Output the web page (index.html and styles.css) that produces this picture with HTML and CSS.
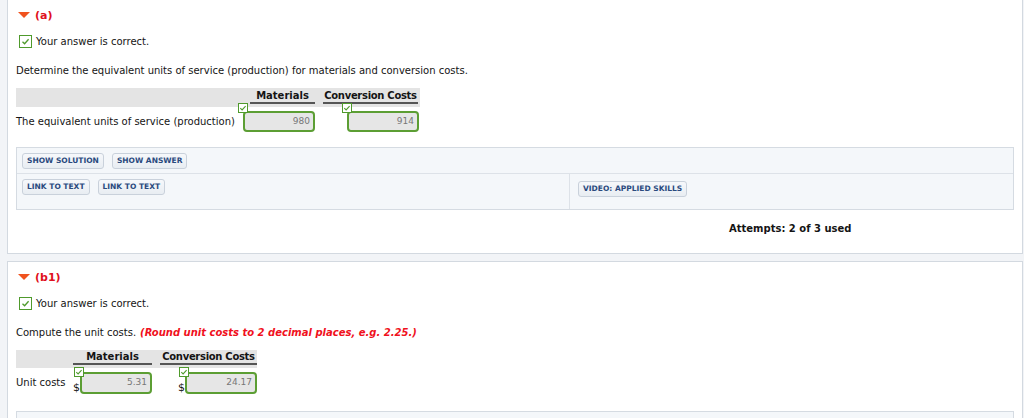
FILE: index.html
```html
<!DOCTYPE html>
<html>
<head>
<meta charset="utf-8">
<link rel="stylesheet" href="styles.css">
</head>
<body>
<div class="panel first">
  <div class="part-head"><span class="tri"></span><span class="part-label">(a)</span></div>
  <div class="correct"><span class="chk"><svg viewBox="0 0 13 13" width="13" height="13"><path d="M3.5 6.8 L5.6 8.8 L9.6 4.2" fill="none" stroke="#4f9a2c" stroke-width="1.3"/></svg></span>Your answer is correct.</div>
  <p class="q">Determine the equivalent units of service (production) for materials and conversion costs.</p>
  <div class="hdr hdr-a">
    <span class="th th-a1">Materials</span>
    <span class="th th-a2">Conversion Costs</span>
  </div>
  <div class="row row-a">
    <span class="lbl">The equivalent units of service (production)</span>
    <span class="cell cell-a1"><span class="mini"><svg viewBox="0 0 10 10" width="10" height="10"><path d="M2.3 5.2 L4.1 6.9 L7.6 3.2" fill="none" stroke="#4f9a2c" stroke-width="1.1"/></svg></span><span class="inp">980</span></span>
    <span class="cell cell-a2"><span class="mini"><svg viewBox="0 0 10 10" width="10" height="10"><path d="M2.3 5.2 L4.1 6.9 L7.6 3.2" fill="none" stroke="#4f9a2c" stroke-width="1.1"/></svg></span><span class="inp">914</span></span>
  </div>
  <div class="btnbox">
    <div class="brow brow1">
      <span class="btn">SHOW SOLUTION</span>
      <span class="btn">SHOW ANSWER</span>
    </div>
    <div class="brow brow2">
      <div class="bcell bleft">
        <span class="btn">LINK TO TEXT</span>
        <span class="btn">LINK TO TEXT</span>
      </div>
      <div class="bcell bright">
        <span class="btn">VIDEO: APPLIED SKILLS</span>
      </div>
    </div>
  </div>
  <div class="attempts">Attempts: 2 of 3 used</div>
</div>
<div class="panel second">
  <div class="part-head"><span class="tri"></span><span class="part-label">(b1)</span></div>
  <div class="correct"><span class="chk"><svg viewBox="0 0 13 13" width="13" height="13"><path d="M3.5 6.8 L5.6 8.8 L9.6 4.2" fill="none" stroke="#4f9a2c" stroke-width="1.3"/></svg></span>Your answer is correct.</div>
  <p class="q">Compute the unit costs. <em class="hint">(Round unit costs to 2 decimal places, e.g. 2.25.)</em></p>
  <div class="hdr hdr-b">
    <span class="th th-b1">Materials</span>
    <span class="th th-b2">Conversion Costs</span>
  </div>
  <div class="row row-b">
    <span class="lbl lbl-b">Unit costs</span>
    <span class="cell cell-b1"><span class="dollar">$</span><span class="mini"><svg viewBox="0 0 10 10" width="10" height="10"><path d="M2.3 5.2 L4.1 6.9 L7.6 3.2" fill="none" stroke="#4f9a2c" stroke-width="1.1"/></svg></span><span class="inp">5.31</span></span>
    <span class="cell cell-b2"><span class="dollar">$</span><span class="mini"><svg viewBox="0 0 10 10" width="10" height="10"><path d="M2.3 5.2 L4.1 6.9 L7.6 3.2" fill="none" stroke="#4f9a2c" stroke-width="1.1"/></svg></span><span class="inp">24.17</span></span>
  </div>
  <div class="btnbox">
    <div class="brow brow1"></div>
  </div>
</div>
</body>
</html>
```

FILE: styles.css
```css
* { box-sizing: border-box; }
html, body { margin: 0; padding: 0; }
body {
  background: #f2f4f7;
  font-family: "DejaVu Sans", Verdana, sans-serif;
  font-size: 10px;
  color: #141414;
  padding-left: 7px;
  height: 418px;
  overflow: hidden;
}
.panel {
  background: #fff;
  border: 1px solid #d3d9e0;
  margin-right: 1px;
  padding: 0 8px 0 8px;
}
.panel.first { margin-top: -1px; height: 255px; }
.panel.second { margin-top: 7px; height: 157px; overflow: hidden; border-bottom: none; }

.part-head { display: flex; align-items: center; height: 30px; padding-left: 2px; }
.tri {
  width: 0; height: 0;
  border-left: 6px solid transparent;
  border-right: 6px solid transparent;
  border-top: 6px solid #f0531f;
  margin-right: 5px;
}
.part-label { color: #e01020; font-weight: bold; font-size: 11px; }

.correct { display: flex; align-items: center; height: 22px; padding-left: 3px; font-size: 10px; }
.chk {
  width: 13px; height: 13px; border: 1.5px solid #4f9a2c; background: #fff;
  display: inline-flex; align-items: center; justify-content: center; margin-right: 4px;
}
.chk svg { display: block; flex: none; }

.q { margin: 0; height: 36px; display: flex; align-items: center; font-size: 10px; }
.hint { color: #f01020; font-weight: bold; margin-left: 4px; }

.hdr { display: flex; background: #e4e4e4; height: 19px; align-items: flex-end; font-weight: bold; font-size: 10px; }
.hdr-a { width: 404px; }
.hdr-b { width: 241px; height: 18px; }
.th { display: block; text-align: center; border-bottom: 2px solid #555; line-height: 13px; margin-bottom: 3px; white-space: nowrap; }
.th-a1 { margin-left: 234px; width: 65px; }
.th-a2 { margin-left: 8px; width: 95px; letter-spacing: -0.3px; }
.th-b1 { margin-left: 57px; width: 79px; }
.th-b2 { margin-left: 8px; width: 97px; letter-spacing: -0.3px; }

.row { display: flex; align-items: center; position: relative; }
.row-a { height: 40px; align-items: flex-start; padding-top: 4px; }
.row-b { height: 43px; align-items: flex-start; padding-top: 4px; }
.lbl { font-size: 10px; line-height: 21px; }
.row-a .lbl { width: 227px; }
.lbl-b { width: 57px; }
.cell { position: relative; display: flex; align-items: flex-end; }
.cell-a1 { width: 72px; }
.cell-a2 { margin-left: 32px; width: 72px; }
.cell-b2 { margin-left: 26px; }
.dollar { font-size: 11px; line-height: 12px; width: 7px; }
.inp {
  display: block; width: 72px; height: 21px;
  border: 2px solid #5c9e34; border-radius: 4px;
  background: #e6e6e6; color: #777;
  text-align: right; padding-right: 3px; font-size: 9px; line-height: 17px;
}
.row-b .inp { height: 22px; }
.mini {
  position: absolute; width: 10px; height: 10px; left: -5px; top: -8px;
  background: #fff; border: 1px solid #4f9a2c;
}
.row-b .mini { left: 1px; top: -5px; }
.mini svg { display: block; margin: -1px; }

.btnbox { background: #f4f7fa; border: 1px solid #d5dbe2; }
.brow { display: flex; align-items: center; gap: 8px; }
.brow1 { height: 26px; padding-left: 5px; border-bottom: 1px solid #dde2e8; }
.brow2 { height: 35px; gap: 0; align-items: stretch; }
.bcell { display: flex; align-items: flex-start; gap: 8px; padding-left: 5px; padding-top: 5px; }
.bleft { width: 553px; border-right: 1px solid #dde2e8; }
.bright { padding-left: 8px; padding-top: 7px; }
.btn {
  display: inline-block; height: 16px; line-height: 14px;
  border: 1px solid #c9d1db; border-radius: 3px;
  background: linear-gradient(#f6f8fb, #e8edf2);
  color: #2a4a7e; font-weight: bold; font-size: 7.5px; padding: 0 4px;
}

.attempts { font-weight: bold; font-size: 10px; height: 36px; display: flex; align-items: center; padding-left: 713px; }
```
